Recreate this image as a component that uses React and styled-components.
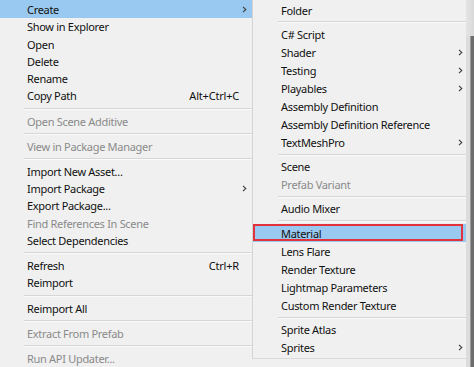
import React from 'react';
import styled, { createGlobalStyle } from 'styled-components';

const GlobalStyle = createGlobalStyle`
  html, body {
    margin: 0;
    padding: 0;
    background: #f0f0f0;
  }
  body {
    font-family: "Noto Sans", "Liberation Sans", sans-serif;
    font-size: 11px;
    color: #111;
  }
`;

const Screen = styled.div`
  display: flex;
  width: 474px;
  height: 367px;
  overflow: hidden;
  background: #f0f0f0;
`;

const Menu = styled.div`
  display: flex;
  flex-direction: column;
  width: 252px;
  flex-shrink: 0;
  background: #f0f0f0;
`;

const SubMenu = styled.div`
  display: flex;
  flex-direction: column;
  width: 213px;
  flex-shrink: 0;
  align-self: flex-start;
  padding-top: 1px;
  padding-bottom: 2px;
  background: #f0f0f0;
  border-left: 1px solid #d4d4d4;
  border-bottom: 1px solid #dadada;
`;

const Edge = styled.div`
  flex: 1;
  display: flex;
  flex-direction: column;
`;

const EdgeTop = styled.div`
  height: 36px;
  background: linear-gradient(to right, #e4e4e4, #d9d9d9);
`;

const EdgeRest = styled.div`
  flex: 1;
  background: linear-gradient(to right, #dcdcdc 0 4px, #9a9a9a 4px 5px, #6d6d6d 5px);
`;

const Item = styled.div`
  position: relative;
  display: flex;
  align-items: center;
  height: ${p => p.$height}px;
  padding-left: ${p => p.$indent}px;
  padding-right: 8px;
  letter-spacing: -0.3px;
  white-space: nowrap;
  color: ${p => (p.$disabled ? '#8a8a8a' : '#111')};
  background: ${p => (p.$active ? '#99c9f0' : 'transparent')};

  ${p =>
    p.$marked &&
    `
    &::after {
      content: '';
      position: absolute;
      left: 0;
      right: 3px;
      top: 0;
      bottom: 1px;
      border: 2px solid #e2323c;
    }
  `}
`;

const Label = styled.span`
  flex: 1;
`;

const Shortcut = styled.span`
  margin-right: 5px;
  letter-spacing: -0.2px;
`;

const Arrow = styled.svg`
  width: 5px;
  height: 7px;
  margin-right: ${p => p.$gap}px;
  flex-shrink: 0;
`;

const Separator = styled.div`
  height: 1px;
  margin: ${p => p.$space};
  margin-left: ${p => p.$indent}px;
  background: #d6d6d6;
  border-bottom: 1px solid #fafafa;
`;

const Chevron = ({ gap }) => (
  <Arrow $gap={gap} viewBox="0 0 5 7">
    <polyline points="1,0.8 3.8,3.5 1,6.2" fill="none" stroke="#3c3c3c" strokeWidth="1.1" />
  </Arrow>
);

const leftItems = [
  { label: 'Create', sub: true, active: true },
  { label: 'Show in Explorer' },
  { label: 'Open' },
  { label: 'Delete' },
  { label: 'Rename' },
  { label: 'Copy Path', shortcut: 'Alt+Ctrl+C' },
  'sep',
  { label: 'Open Scene Additive', disabled: true },
  'sep',
  { label: 'View in Package Manager', disabled: true },
  'sep',
  { label: 'Import New Asset...' },
  { label: 'Import Package', sub: true },
  { label: 'Export Package...' },
  { label: 'Find References In Scene', disabled: true },
  { label: 'Select Dependencies' },
  'sep',
  { label: 'Refresh', shortcut: 'Ctrl+R' },
  { label: 'Reimport' },
  'sep',
  { label: 'Reimport All' },
  'sep',
  { label: 'Extract From Prefab', disabled: true },
  'sep',
  { label: 'Run API Updater...', disabled: true },
];

const rightItems = [
  { label: 'Folder' },
  'sep',
  { label: 'C# Script' },
  { label: 'Shader', sub: true },
  { label: 'Testing', sub: true },
  { label: 'Playables', sub: true },
  { label: 'Assembly Definition' },
  { label: 'Assembly Definition Reference' },
  { label: 'TextMeshPro', sub: true },
  'sep',
  { label: 'Scene' },
  { label: 'Prefab Variant', disabled: true },
  'sep',
  { label: 'Audio Mixer' },
  'sep',
  { label: 'Material', active: true, marked: true },
  { label: 'Lens Flare' },
  { label: 'Render Texture' },
  { label: 'Lightmap Parameters' },
  { label: 'Custom Render Texture' },
  'sep',
  { label: 'Sprite Atlas' },
  { label: 'Sprites', sub: true },
];

const MenuList = ({ items, indent, sepIndent, sepSpace, arrowGap, firstHeight }) =>
  items.map((it, i) =>
    it === 'sep' ? (
      <Separator key={i} $indent={sepIndent} $space={sepSpace} />
    ) : (
      <Item
        key={i}
        $height={i === 0 ? firstHeight : 18}
        $indent={indent}
        $active={it.active}
        $disabled={it.disabled}
        $marked={it.marked}
      >
        <Label>{it.label}</Label>
        {it.shortcut && <Shortcut>{it.shortcut}</Shortcut>}
        {it.sub && <Chevron gap={arrowGap} />}
      </Item>
    )
  );

export default function App() {
  return (
    <>
      <GlobalStyle />
      <Screen>
        <Menu>
          <MenuList
            items={leftItems}
            indent={27}
            sepIndent={24}
            sepSpace="3.3px 0 2.7px"
            arrowGap={-3}
            firstHeight={19}
          />
        </Menu>
        <SubMenu>
          <MenuList
            items={rightItems}
            indent={28}
            sepIndent={25}
            sepSpace="2.4px 0 1.9px"
            arrowGap={-5}
            firstHeight={18}
          />
        </SubMenu>
        <Edge>
          <EdgeTop />
          <EdgeRest />
        </Edge>
      </Screen>
    </>
  );
}
